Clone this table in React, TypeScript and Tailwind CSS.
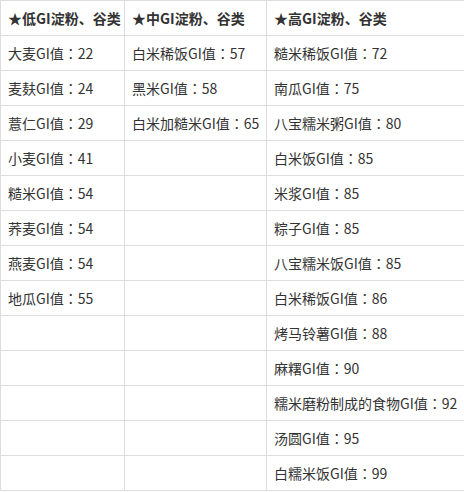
const low = [
  "大麦GI值：22",
  "麦麸GI值：24",
  "薏仁GI值：29",
  "小麦GI值：41",
  "糙米GI值：54",
  "荞麦GI值：54",
  "燕麦GI值：54",
  "地瓜GI值：55",
];
const mid = ["白米稀饭GI值：57", "黑米GI值：58", "白米加糙米GI值：65"];
const high = [
  "糙米稀饭GI值：72",
  "南瓜GI值：75",
  "八宝糯米粥GI值：80",
  "白米饭GI值：85",
  "米浆GI值：85",
  "粽子GI值：85",
  "八宝糯米饭GI值：85",
  "白米稀饭GI值：86",
  "烤马铃薯GI值：88",
  "麻糬GI值：90",
  "糯米磨粉制成的食物GI值：92",
  "汤圆GI值：95",
  "白糯米饭GI值：99",
];

const rows = Array.from({ length: 13 }, (_, i) => [low[i] ?? "", mid[i] ?? "", high[i] ?? ""]);

// the SC font puts the fullwidth colon at the left of its box; TC centres it
function Cell({ text }: { text: string }) {
  if (!text) return null;
  const [name, value] = text.split("：");
  return (
    <>
      {name}
      <span style={{ fontFamily: '"Noto Sans CJK TC", sans-serif' }}>：</span>
      {value}
    </>
  );
}

export default function App() {
  return (
    <div className="w-[464px] h-[492px] overflow-hidden bg-white">
      <table
        className="w-[467px] border-collapse table-fixed text-[14px] text-[#333]"
        style={{ fontFamily: '"Noto Sans CJK SC", "Noto Sans", sans-serif' }}
      >
        <colgroup>
          <col className="w-[124px]" />
          <col className="w-[142px]" />
          <col className="w-[201px]" />
        </colgroup>
        <thead>
          <tr className="h-[35px]">
            {["★低GI淀粉、谷类", "★中GI淀粉、谷类", "★高GI淀粉、谷类"].map((h) => (
              <th
                key={h}
                className="border border-[#ddd] px-[7px] text-left font-bold align-middle whitespace-nowrap"
              >
                {h}
              </th>
            ))}
          </tr>
        </thead>
        <tbody>
          {rows.map((r, i) => (
            <tr key={i} className="h-[35px]">
              {r.map((c, j) => (
                <td key={j} className="border border-[#ddd] px-[7px] align-middle whitespace-nowrap">
                  <Cell text={c} />
                </td>
              ))}
            </tr>
          ))}
        </tbody>
      </table>
    </div>
  );
}
